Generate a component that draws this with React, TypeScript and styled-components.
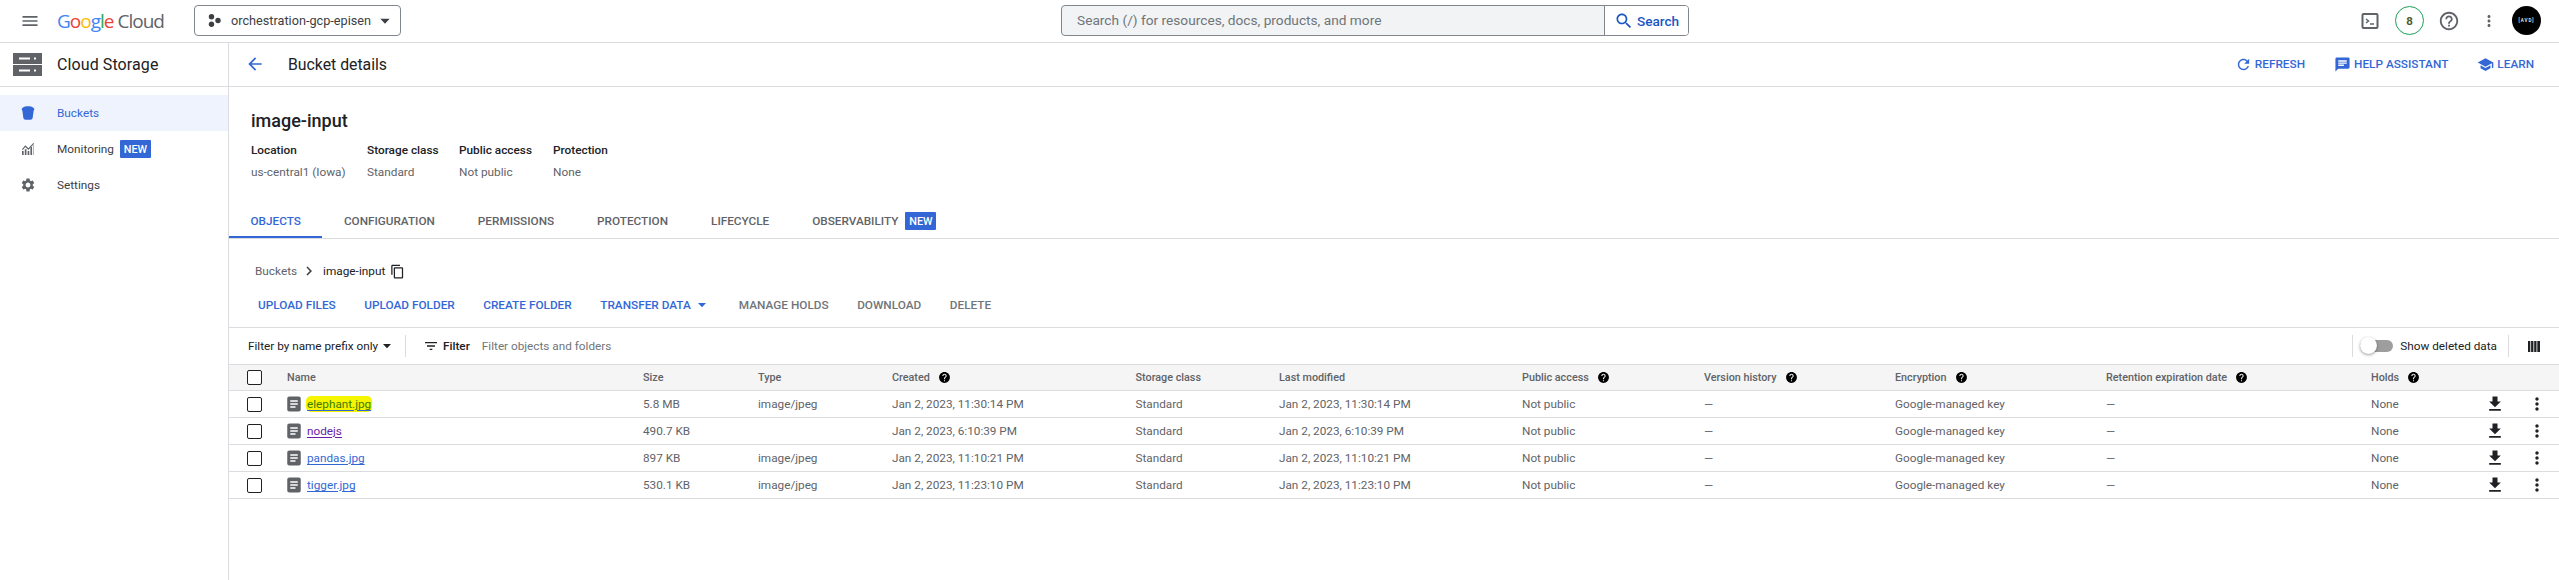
import React from "react";
import styled, { createGlobalStyle } from "styled-components";

const Global = createGlobalStyle`
  html, body { margin: 0; padding: 0; background: #fff; overflow: hidden; }
  body { font-family: Roboto, "Liberation Sans", sans-serif; color: #202124; }
  * { box-sizing: border-box; }
`;

const BLUE = "#3367d6";
const LINE = "#dadce0";
const GRID = "229px";
const COLS = "58px 356px 115px 134px 243.5px 143.5px 243px 182px 191px 211px 265px 118px 42px 1fr";

const P = {
  menu: "M3 18h18v-2H3v2zm0-5h18v-2H3v2zm0-7v2h18V6H3z",
  back: "M20 11H7.83l5.59-5.59L12 4l-8 8 8 8 1.41-1.41L7.83 13H20v-2z",
  search: "M15.5 14h-.79l-.28-.27C15.41 12.59 16 11.11 16 9.5 16 5.91 13.09 3 9.5 3S3 5.91 3 9.5 5.91 16 9.5 16c1.61 0 3.09-.59 4.23-1.57l.27.28v.79l5 4.99L20.49 19l-4.99-5zm-6 0C7.01 14 5 11.99 5 9.5S7.01 5 9.5 5 14 7.01 14 9.5 11.99 14 9.5 14z",
  helpO: "M11 18h2v-2h-2v2zm1-16C6.48 2 2 6.48 2 12s4.48 10 10 10 10-4.48 10-10S17.52 2 12 2zm0 18c-4.41 0-8-3.59-8-8s3.59-8 8-8 8 3.59 8 8-3.59 8-8 8zm0-14c-2.21 0-4 1.79-4 4h2c0-1.1.9-2 2-2s2 .9 2 2c0 2-3 1.75-3 5h2c0-2.25 3-2.5 3-5 0-2.21-1.79-4-4-4z",
  help: "M12 2C6.48 2 2 6.48 2 12s4.48 10 10 10 10-4.48 10-10S17.52 2 12 2zm1 17h-2v-2h2v2zm2.07-7.75l-.9.92C13.45 12.9 13 13.5 13 15h-2v-.5c0-1.1.45-2.1 1.17-2.83l1.24-1.26c.37-.36.59-.86.59-1.41 0-1.1-.9-2-2-2s-2 .9-2 2H8c0-2.21 1.79-4 4-4s4 1.79 4 4c0 .88-.36 1.68-.93 2.25z",
  more: "M12 8c1.1 0 2-.9 2-2s-.9-2-2-2-2 .9-2 2 .9 2 2 2zm0 2c-1.1 0-2 .9-2 2s.9 2 2 2 2-.9 2-2-.9-2-2-2zm0 6c-1.1 0-2 .9-2 2s.9 2 2 2 2-.9 2-2-.9-2-2-2z",
  download: "M19 9h-4V3H9v6H5l7 7 7-7zM5 18v2h14v-2H5z",
  refresh: "M17.65 6.35C16.2 4.9 14.21 4 12 4c-4.42 0-7.99 3.58-7.99 8s3.57 8 7.99 8c3.73 0 6.84-2.55 7.73-6h-2.08c-.82 2.33-3.04 4-5.65 4-3.31 0-6-2.69-6-6s2.69-6 6-6c1.66 0 3.14.69 4.22 1.78L13 11h7V4l-2.35 2.35z",
  chat: "M20 2H4c-1.1 0-2 .9-2 2v18l4-4h14c1.1 0 2-.9 2-2V4c0-1.1-.9-2-2-2zM6 9h12v2H6V9zm8 5H6v-2h8v2zm4-6H6V6h12v2z",
  school: "M5 13.18v4L12 21l7-3.82v-4L12 17l-7-3.82zM12 3L1 9l11 6 9-4.91V17h2V9L12 3z",
  settings: "M19.14 12.94c.04-.3.06-.61.06-.94 0-.32-.02-.64-.07-.94l2.03-1.58c.18-.14.23-.41.12-.61l-1.92-3.32c-.12-.22-.37-.29-.59-.22l-2.39.96c-.5-.38-1.03-.7-1.62-.94l-.36-2.54c-.04-.24-.24-.41-.48-.41h-3.84c-.24 0-.43.17-.47.41l-.36 2.54c-.59.24-1.13.57-1.62.94l-2.39-.96c-.22-.08-.47 0-.59.22L2.74 8.87c-.12.21-.08.47.12.61l2.03 1.58c-.05.3-.09.63-.09.94s.02.64.07.94l-2.03 1.58c-.18.14-.23.41-.12.61l1.92 3.32c.12.22.37.29.59.22l2.39-.96c.5.38 1.03.7 1.62.94l.36 2.54c.05.24.24.41.48.41h3.84c.24 0 .44-.17.47-.41l.36-2.54c.59-.24 1.13-.56 1.62-.94l2.39.96c.22.08.47 0 .59-.22l1.92-3.32c.12-.22.07-.47-.12-.61l-2.01-1.58zM12 15.6c-1.98 0-3.6-1.62-3.6-3.6s1.62-3.6 3.6-3.6 3.6 1.62 3.6 3.6-1.62 3.6-3.6 3.6z",
  filter: "M10 18h4v-2h-4v2zM3 6v2h18V6H3zm3 7h12v-2H6v2z",
  copy: "M16 1H4c-1.1 0-2 .9-2 2v14h2V3h12V1zm3 4H8c-1.1 0-2 .9-2 2v14c0 1.1.9 2 2 2h11c1.1 0 2-.9 2-2V7c0-1.1-.9-2-2-2zm0 16H8V7h11v14z",
  chevron: "M10 6L8.59 7.41 13.17 12l-4.58 4.59L10 18l6-6z",
  drop: "M4 8l8 8.500L20 8z",
  bucket: "M4 4C6 2.500 9 2 12 2s6 .5 8 2c1 .8 1.500 1.500 1.500 2.300 0 .8-.5 1.500-1 2L19 19c-.2 1.800-1.500 3-3.300 3H8.300C6.500 22 5.200 20.800 5 19L3.500 8.300c-.5-.5-1-1.200-1-2 0-.8.5-1.500 1.500-2.300z",
  chart: "M3 21v-6h2.500v6H3zm4.200 0v-8.500h2.500V21H7.200zm4.200 0v-6h2.500v6h-2.500zm4.200 0V9h2.500v12h-2.500zm4.200 0V6h.7v15h-.7zM3 12.500l5-6 4.500 4.500L20 3l1.200 1.200L12.500 13.400 8 9l-4 4.800z",
  file: "M6 2h12c2 0 3 1 3 3v14c0 2-1 3-3 3H6c-2 0-3-1-3-3V5c0-2 1-3 3-3zm1 5v2h10V7H7zm0 4v2h10v-2H7zm0 4v2h7v-2H7z",
};

const Svg = styled.svg<{ $w: number; $c?: string }>`
  width: ${(p) => p.$w}px;
  height: ${(p) => p.$w}px;
  fill: ${(p) => p.$c ?? "#5f6368"};
  flex: none;
  display: block;
`;
const Icon = ({ d, w, c }: { d: string; w: number; c?: string }) => (
  <Svg viewBox="0 0 24 24" $w={w} $c={c}><path fillRule="evenodd" d={d} /></Svg>
);

const Page = styled.div`
  height: 580px; width: 2559px; display: flex; flex-direction: column; overflow: hidden;
`;
const TopBar = styled.header`
  height: 43px; flex: none; display: flex; align-items: center; padding-left: 20px;
  border-bottom: 1px solid ${LINE}; padding-bottom: 1px;
`;
const Logo = styled.div`
  margin-left: 17px; width: 107px; font-family: "Open Sans", Roboto, sans-serif; font-size: 19px; letter-spacing: -1px;
  line-height: 24px; color: #5f6368; white-space: nowrap; display: flex; gap: 4px;
`;
const L = styled.span<{ $c: string }>`color: ${(p) => p.$c};`;
const Project = styled.div`
  margin-left: 30px; width: 207px; height: 31px; border: 1px solid #80868b; border-radius: 4px;
  display: flex; align-items: center; padding-left: 13px; font-size: 12.700px; color: #3c4043; gap: 10px; white-space: nowrap;
`;
const ProjectDots = styled.svg`width: 13px; height: 13px; fill: #3c4043; flex: none;`;
const ProjectArrow = styled.span`margin-left: -3px; display: flex;`;
const SearchBox = styled.div`
  margin-left: 660px; width: 628px; height: 31px; border: 1px solid #80868b; border-radius: 4px;
  display: flex; background: #f1f3f4; overflow: hidden;
`;
const SearchInput = styled.div`
  flex: 1; padding-left: 15px; font-size: 13.700px; line-height: 29px; color: #70757a; white-space: nowrap;
`;
const SearchBtn = styled.div`
  width: 84px; background: #fff; border-left: 1px solid #80868b; display: flex; align-items: center; padding-left: 9px;
  gap: 3px; color: #1a56c4; font-size: 13.600px; font-weight: 500;
`;
const TopRight = styled.div`
  margin-left: auto; display: flex; align-items: center; padding-right: 18px;
`;
const Terminal = styled.svg`width: 18px; height: 18px; fill: none; stroke: #5f6368; stroke-width: 2; flex: none;`;
const Badge = styled.div`
  margin-left: 16px; width: 29px; height: 29px; border: 1.500px solid #1e9e5a; border-radius: 50%;
  display: flex; align-items: center; justify-content: center; font-size: 11.500px; font-weight: 700; color: #4b5a2a;
`;
const HelpWrap = styled.div`margin-left: 14px;`;
const DotsWrap = styled.div`margin-left: 20px;`;
const Avatar = styled.div`
  margin-left: 14px; width: 29px; height: 29px; border-radius: 50%; background: #000; color: #fff;
  display: flex; align-items: center; justify-content: center; font-size: 4.500px; letter-spacing: 1px; font-weight: 500;
`;

const Body = styled.div`flex: 1; display: flex; min-height: 0;`;
const Sidebar = styled.nav`width: ${GRID}; flex: none; border-right: 1px solid ${LINE};`;
const SideHead = styled.div`
  height: 44px; border-bottom: 1px solid ${LINE}; display: flex; align-items: center; padding-left: 13px; gap: 15px;
  font-size: 16px; letter-spacing: 0.1px; margin-bottom: 8px; padding-bottom: 1px;
`;
const StorageIcon = styled.svg`width: 29px; height: 23px; flex: none;`;
const NavItem = styled.div<{ $active?: boolean }>`
  height: 36px; display: flex; align-items: center; padding-left: 20px; gap: 21px; font-size: 11.800px;
  background: ${(p) => (p.$active ? "#eff3fd" : "transparent")}; color: ${(p) => (p.$active ? BLUE : "#3c4043")};
`;
const New = styled.span`
  background: ${BLUE}; color: #fff; font-size: 10.800px; font-weight: 500; height: 18px; width: 31px; border-radius: 1px;
  display: inline-flex; align-items: center; justify-content: center;
`;
const NavNew = styled(New)`margin-left: -15px;`;

const Main = styled.main`flex: 1; min-width: 0;`;
const PageHead = styled.div`
  height: 44px; border-bottom: 1px solid ${LINE}; display: flex; align-items: center; padding-left: 16px; padding-bottom: 1px;
`;
const Heading = styled.div`margin-left: 23px; font-size: 15.800px;`;
const HeadActions = styled.div`margin-left: auto; display: flex; padding-right: 25px; gap: 29px; align-items: center;`;
const HeadBtn = styled.div`
  display: flex; align-items: center; gap: 3px; color: ${BLUE}; font-size: 11.800px; font-weight: 500;
`;
const Details = styled.section`padding: 22px 0 0 22px;`;
const Title = styled.h1`margin: 0; font-size: 18px; line-height: 24px; font-weight: 500; color: #202124;`;
const Meta = styled.div`
  margin-top: 9px; display: grid; grid-template-columns: 116px 92px 94px auto; justify-content: start; row-gap: 6px;
  font-size: 11.800px; line-height: 16px;
`;
const MetaLabel = styled.div`font-weight: 500; color: #202124;`;
const MetaValue = styled.div`color: #5f6368;`;
const Tabs = styled.div`
  margin-top: 26px; height: 33px; display: flex; border-bottom: 1px solid ${LINE};
`;
const Tab = styled.div<{ $active?: boolean }>`
  height: 32px; padding: 0 21.500px; display: flex; align-items: center; gap: 7px; font-size: 11.750px; font-weight: 500;
  color: ${(p) => (p.$active ? BLUE : "#5f6368")}; border-bottom: 2px solid ${(p) => (p.$active ? BLUE : "transparent")};
`;
const Crumbs = styled.div`
  margin: 24px 0 0 26px; height: 16px; display: flex; align-items: center; font-size: 11.800px; color: #5f6368;
`;
const ChevronWrap = styled.span`margin-left: 3px;`;
const CrumbCurrent = styled.span`color: #202124; margin: 0 5px 0 5px;`;
const Actions = styled.div`
  margin-top: 16px; padding-left: 29px; height: 20px; display: flex; align-items: center; gap: 28.500px; font-size: 11.800px; font-weight: 500;
  color: ${BLUE};
`;
const ActionGroup = styled.span`display: flex; align-items: center; gap: 5px; margin-right: 2.500px;`;
const Disabled = styled.span`color: #70757a;`;
const FilterBar = styled.div`
  margin-top: 12px; height: 38px; border-top: 1px solid ${LINE}; border-bottom: 1px solid ${LINE};
  display: flex; align-items: center; padding-left: 19px; font-size: 11.750px;
`;
const Divider = styled.div`width: 1px; height: 22px; background: ${LINE}; flex: none;`;
const FilterSelect = styled.div`display: flex; align-items: center; width: 157px; gap: 3px;`;
const FilterLabel = styled.div`display: flex; align-items: center; margin-left: 17px; gap: 4px; font-weight: 500;`;
const FilterPlaceholder = styled.div`margin-left: 12px; color: #70757a;`;
const FilterRight = styled.div`margin-left: auto; display: flex; align-items: center; padding-right: 19px;`;
const Toggle = styled.div`position: relative; margin-left: 7px; width: 33px; height: 12px; background: #9e9e9e; border-radius: 6px;`;
const Knob = styled.div`
  position: absolute; left: 0; top: -3px; width: 17px; height: 17px; border-radius: 50%; background: #fff;
  box-shadow: 0 1px 3px rgba(0,0,0,.4);
`;
const ToggleText = styled.div`margin: 0 11px 0 7px;`;
const ColumnsIcon = styled.svg`margin-left: 19px; width: 12px; height: 11px; fill: #202124; display: block; flex: none;`;

const Row = styled.div<{ $head?: boolean }>`
  display: grid; grid-template-columns: ${COLS}; align-items: center; height: ${(p) => (p.$head ? 26 : 27)}px;
  border-bottom: 1px solid ${LINE}; background: ${(p) => (p.$head ? "#f5f5f5" : "#fff")};
  font-size: ${(p) => (p.$head ? 10.8 : 11.75)}px; color: #5f6368; font-weight: ${(p) => (p.$head ? 500 : 400)};
`;
const Cell = styled.div`display: flex; align-items: center; gap: 8px; white-space: nowrap; min-width: 0;`;
const IconCell = styled(Cell)`margin-left: -4px;`;
const CheckCell = styled.div`padding-left: 18px; display: flex;`;
const Check = styled.div`width: 15px; height: 15px; border: 1.500px solid #202124; border-radius: 2px; background: #fff;`;
const FileLink = styled.a<{ $visited?: boolean; $mark?: boolean }>`
  color: ${(p) => (p.$visited ? "#681da8" : p.$mark ? "#3d7a00" : BLUE)};
  text-decoration: underline; text-decoration-color: ${(p) => (p.$visited ? "#681da8" : BLUE)}; text-underline-offset: 2px;
  ${(p) => p.$mark && "background: #f6f500; border-radius: 4px; box-shadow: 0 0 0 1px #f6f500;"}
`;
const NameCell = styled(Cell)`margin-left: -2px; gap: 4px;`;

type F = { name: string; size: string; type: string; date: string; visited?: boolean; mark?: boolean };
const files: F[] = [
  { name: "elephant.jpg", size: "5.8 MB", type: "image/jpeg", date: "Jan 2, 2023, 11:30:14 PM", mark: true },
  { name: "nodejs", size: "490.7 KB", type: "", date: "Jan 2, 2023, 6:10:39 PM", visited: true },
  { name: "pandas.jpg", size: "897 KB", type: "image/jpeg", date: "Jan 2, 2023, 11:10:21 PM" },
  { name: "tigger.jpg", size: "530.1 KB", type: "image/jpeg", date: "Jan 2, 2023, 11:23:10 PM" },
];

const Q = () => <Icon d={P.help} w={13} c="#000" />;

export default function App() {
  return (
    <Page>
      <Global />
      <TopBar>
        <Icon d={P.menu} w={20} c="#5f6368" />
        <Logo>
          <span>
            <L $c="#4285f4">G</L><L $c="#ea4335">o</L><L $c="#fbbc05">o</L><L $c="#4285f4">g</L><L $c="#34a853">l</L><L $c="#ea4335">e</L>
          </span>
          <span>Cloud</span>
        </Logo>
        <Project>
          <ProjectDots viewBox="0 0 13 13"><circle cx="3.500" cy="2.800" r="2.700" /><circle cx="10" cy="6.500" r="2.700" /><circle cx="3.500" cy="10.200" r="2.700" /></ProjectDots>
          orchestration-gcp-episen
          <ProjectArrow><Icon d={P.drop} w={14} c="#3c4043" /></ProjectArrow>
        </Project>
        <SearchBox>
          <SearchInput>Search (/) for resources, docs, products, and more</SearchInput>
          <SearchBtn><Icon d={P.search} w={20} c="#1a56c4" />Search</SearchBtn>
        </SearchBox>
        <TopRight>
          <Terminal viewBox="0 0 18 18"><rect x="1.500" y="2" width="15" height="14" rx="1" /><path d="M5 7l2.500 2L5 11M9 12h4" strokeWidth="1.500" /></Terminal>
          <Badge>8</Badge>
          <HelpWrap><Icon d={P.helpO} w={22} /></HelpWrap>
          <DotsWrap><Icon d={P.more} w={18} /></DotsWrap>
          <Avatar>[AVD]</Avatar>
        </TopRight>
      </TopBar>
      <Body>
        <Sidebar>
          <SideHead>
            <StorageIcon viewBox="0 0 29 23">
              <rect width="29" height="11" fill="#5f6368" /><rect y="12" width="29" height="11" fill="#5f6368" />
              <rect x="6" y="4.500" width="11" height="2" fill="#fff" /><rect x="6" y="16.500" width="11" height="2" fill="#fff" />
              <rect x="21" y="4.500" width="2" height="2" fill="#fff" /><rect x="21" y="16.500" width="2" height="2" fill="#fff" />
            </StorageIcon>
            Cloud Storage
          </SideHead>
          <NavItem $active><Icon d={P.bucket} w={16} c={BLUE} />Buckets</NavItem>
          <NavItem><Icon d={P.chart} w={16} />Monitoring<NavNew>NEW</NavNew></NavItem>
          <NavItem><Icon d={P.settings} w={16} />Settings</NavItem>
        </Sidebar>
        <Main>
          <PageHead>
            <Icon d={P.back} w={20} c={BLUE} />
            <Heading>Bucket details</Heading>
            <HeadActions>
              <HeadBtn><Icon d={P.refresh} w={17} c={BLUE} />REFRESH</HeadBtn>
              <HeadBtn><Icon d={P.chat} w={17} c={BLUE} />HELP ASSISTANT</HeadBtn>
              <HeadBtn><Icon d={P.school} w={17} c={BLUE} />LEARN</HeadBtn>
            </HeadActions>
          </PageHead>
          <Details>
            <Title>image-input</Title>
            <Meta>
              <MetaLabel>Location</MetaLabel><MetaLabel>Storage class</MetaLabel><MetaLabel>Public access</MetaLabel><MetaLabel>Protection</MetaLabel>
              <MetaValue>us-central1 (Iowa)</MetaValue><MetaValue>Standard</MetaValue><MetaValue>Not public</MetaValue><MetaValue>None</MetaValue>
            </Meta>
          </Details>
          <Tabs>
            <Tab $active>OBJECTS</Tab><Tab>CONFIGURATION</Tab><Tab>PERMISSIONS</Tab><Tab>PROTECTION</Tab><Tab>LIFECYCLE</Tab>
            <Tab>OBSERVABILITY<New>NEW</New></Tab>
          </Tabs>
          <Crumbs>
            Buckets<ChevronWrap><Icon d={P.chevron} w={18} c="#3c4043" /></ChevronWrap><CrumbCurrent>image-input</CrumbCurrent><Icon d={P.copy} w={15} c="#202124" />
          </Crumbs>
          <Actions>
            <span>UPLOAD FILES</span><span>UPLOAD FOLDER</span><span>CREATE FOLDER</span>
            <ActionGroup>TRANSFER DATA<Icon d={P.drop} w={12} c={BLUE} /></ActionGroup>
            <Disabled>MANAGE HOLDS</Disabled><Disabled>DOWNLOAD</Disabled><Disabled>DELETE</Disabled>
          </Actions>
          <FilterBar>
            <FilterSelect>Filter by name prefix only<Icon d={P.drop} w={12} c="#202124" /></FilterSelect>
            <Divider />
            <FilterLabel><Icon d={P.filter} w={16} c="#202124" />Filter</FilterLabel>
            <FilterPlaceholder>Filter objects and folders</FilterPlaceholder>
            <FilterRight>
              <Divider />
              <Toggle><Knob /></Toggle>
              <ToggleText>Show deleted data</ToggleText>
              <Divider />
              <ColumnsIcon viewBox="0 0 12 11"><rect x="0" width="2.300" height="11" /><rect x="3.100" width="2.300" height="11" /><rect x="6.200" width="2.300" height="11" /><rect x="9.300" width="2.700" height="11" /></ColumnsIcon>
            </FilterRight>
          </FilterBar>
          <Row $head>
            <CheckCell><Check /></CheckCell>
            <Cell>Name</Cell><Cell>Size</Cell><Cell>Type</Cell>
            <Cell>Created <Q /></Cell><Cell>Storage class</Cell><Cell>Last modified</Cell>
            <Cell>Public access <Q /></Cell><Cell>Version history <Q /></Cell><Cell>Encryption <Q /></Cell>
            <Cell>Retention expiration date <Q /></Cell><Cell>Holds <Q /></Cell><Cell /><Cell />
          </Row>
          {files.map((f) => (
            <Row key={f.name}>
              <CheckCell><Check /></CheckCell>
              <NameCell><Icon d={P.file} w={18} /><FileLink $visited={f.visited} $mark={f.mark}>{f.name}</FileLink></NameCell>
              <Cell>{f.size}</Cell><Cell>{f.type}</Cell><Cell>{f.date}</Cell><Cell>Standard</Cell><Cell>{f.date}</Cell>
              <Cell>Not public</Cell><Cell>—</Cell><Cell>Google-managed key</Cell><Cell>—</Cell><Cell>None</Cell>
              <IconCell><Icon d={P.download} w={20} c="#202124" /></IconCell>
              <IconCell><Icon d={P.more} w={20} c="#202124" /></IconCell>
            </Row>
          ))}
        </Main>
      </Body>
    </Page>
  );
}
